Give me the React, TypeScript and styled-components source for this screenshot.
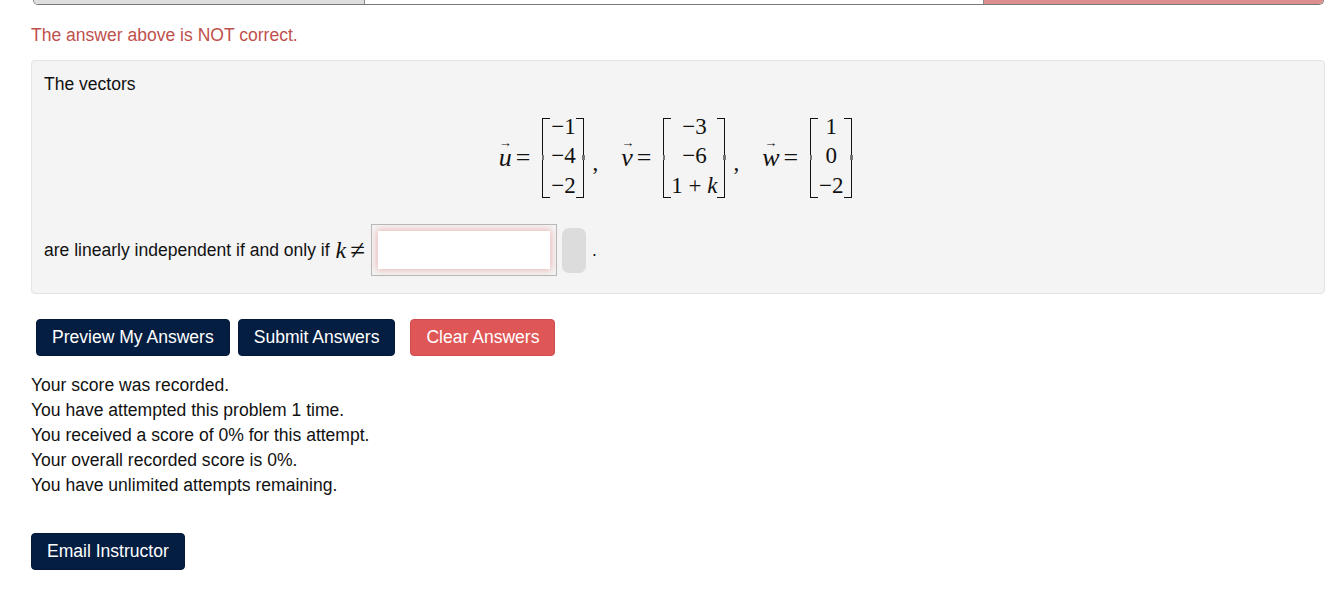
import React from "react";
import styled, { createGlobalStyle } from "styled-components";

const Global = createGlobalStyle`
  html, body { margin: 0; padding: 0; background: #fff; }
  body { font-family: "Liberation Sans", Arial, sans-serif; font-size: 17.55px; color: #111; overflow: hidden; }
`;

const Page = styled.div`
  width: 1342px;
  height: 611px;
  padding: 0 17px 0 31px;
  box-sizing: border-box;
`;

const ResultStrip = styled.div`
  display: grid;
  grid-template-columns: 331px 619px 1fr;
  height: 4px;
  margin: 0 1px 0 2px;
  border: 1px solid #777;
  border-top: none;
  border-radius: 0 0 5px 5px;
  overflow: hidden;
`;

const StripCell = styled.div<{ $bg: string }>`
  background: ${(p) => p.$bg};
  border-right: 1px solid #888;
  &:last-child { border-right: none; }
`;

const Feedback = styled.p`
  margin: 18px 0 0;
  height: 25px;
  line-height: 25px;
  color: #c0504d;
`;

const ProblemPanel = styled.section`
  margin-top: 12px;
  height: 234px;
  box-sizing: border-box;
  padding: 11px 12px;
  background: #f4f4f4;
  border: 1px solid #e3e3e3;
  border-radius: 4px;
`;

const ProblemText = styled.div`
  line-height: 25px;
`;

const DisplayMath = styled.div`
  display: flex;
  justify-content: center;
  align-items: center;
  margin: 21px 0 0 -5px;
  height: 80px;
  font-family: "Liberation Serif", "DejaVu Serif", serif;
  font-size: 23px;
  color: #111;
`;

const Term = styled.span`
  display: flex;
  align-items: center;
  margin-right: 23px;
  &:last-child { margin-right: 0; }
`;

const VarName = styled.i`
  position: relative;
  display: inline-block;
  font-size: 26px;
  font-style: italic;
  &::before {
    content: "→";
    position: absolute;
    left: 0;
    right: 0;
    top: -8px;
    font-size: 13px;
    font-style: normal;
    text-align: center;
  }
`;

const Equals = styled.span`
  margin: 0 12px 0 4px;
  font-size: 26px;
  line-height: 1;
`;

const Matrix = styled.span<{ $width: number }>`
  position: relative;
  display: grid;
  grid-auto-rows: 29.5px;
  width: ${(p) => p.$width}px;
  height: 80px;
  box-sizing: border-box;
  padding-bottom: 4px;
  align-content: center;
  justify-items: center;
  align-items: center;
  white-space: nowrap;
`;

const Bracket = styled.span<{ $side: "left" | "right" }>`
  position: absolute;
  top: 0;
  bottom: 0;
  ${(p) => p.$side}: 0;
  width: 8px;
  box-sizing: border-box;
  border: 1.5px solid #111;
  ${(p) => (p.$side === "left" ? "border-right: none;" : "border-left: none;")}
  &::after {
    content: "";
    position: absolute;
    top: 50%;
    ${(p) => (p.$side === "left" ? "left: -1.5px;" : "right: -1.5px;")}
    width: 2.5px;
    height: 5px;
    margin-top: -3px;
    background: #777;
  }
`;

const Comma = styled.span`
  margin-left: 8px;
  align-self: flex-end;
  padding-bottom: 22px;
`;

const AnswerRow = styled.div`
  display: flex;
  align-items: center;
  margin-top: 26px;
  height: 52px;
`;

const InlineVar = styled.i`
  font-family: "Liberation Serif", serif;
  font-size: 24px;
  font-weight: 400;
  margin: 0 4px 0 6px;
`;

const NotEqual = styled.span`
  font-family: "Liberation Serif", serif;
  font-size: 27px;
  margin-right: 6px;
`;

const InputFrame = styled.div`
  width: 186px;
  height: 52px;
  box-sizing: border-box;
  padding: 6px;
  border: 1px solid #b9b9b9;
`;

const AnswerInput = styled.input`
  display: block;
  width: 100%;
  height: 100%;
  box-sizing: border-box;
  margin: 0;
  padding: 0;
  border: none;
  outline: none;
  background: #fff;
  box-shadow: 0 0 7px 1px rgba(217, 83, 79, 0.4);
`;

const PreviewChip = styled.div`
  width: 24px;
  height: 45px;
  margin-left: 5px;
  background: #dcdcdc;
  border-radius: 7px;
`;

const Period = styled.span`
  margin-left: 6px;
`;

const ButtonRow = styled.div`
  display: flex;
  margin: 25px 0 0 5px;
`;

const ActionButton = styled.button<{ $danger?: boolean; $gap?: number }>`
  height: 37px;
  box-sizing: border-box;
  padding: 0 15px;
  margin: 0 ${(p) => p.$gap ?? 0}px 0 0;
  font: inherit;
  color: #fff;
  white-space: nowrap;
  background: ${(p) => (p.$danger ? "#df5656" : "#041e42")};
  border: 1px solid ${(p) => (p.$danger ? "#d04c4c" : "#03183a")};
  border-radius: 4px;
`;

const Status = styled.div`
  margin-top: 17px;
  line-height: 25px;
`;

const StatusLine = styled.div``;

const EmailWrap = styled.div`
  margin-top: 35px;
`;

const Row = ({ children }: { children: React.ReactNode }) => <span>{children}</span>;

const Mat = ({ width, rows }: { width: number; rows: React.ReactNode[] }) => (
  <Matrix $width={width}>
    <Bracket $side="left" />
    {rows.map((r, i) => (
      <Row key={i}>{r}</Row>
    ))}
    <Bracket $side="right" />
  </Matrix>
);

export default function App() {
  return (
    <Page>
      <Global />
      <ResultStrip>
        <StripCell $bg="#dedede" />
        <StripCell $bg="#ffffff" />
        <StripCell $bg="#dd8f8f" />
      </ResultStrip>
      <Feedback>The answer above is NOT correct.</Feedback>
      <ProblemPanel>
        <ProblemText>The vectors</ProblemText>
        <DisplayMath>
          <Term>
            <VarName>u</VarName>
            <Equals>=</Equals>
            <Mat width={42} rows={["−1", "−4", "−2"]} />
            <Comma>,</Comma>
          </Term>
          <Term>
            <VarName>v</VarName>
            <Equals>=</Equals>
            <Mat width={62} rows={["−3", "−6", <>1 + <i>k</i></>]} />
            <Comma>,</Comma>
          </Term>
          <Term>
            <VarName>w</VarName>
            <Equals>=</Equals>
            <Mat width={42} rows={["1", "0", "−2"]} />
          </Term>
        </DisplayMath>
        <AnswerRow>
          are linearly independent if and only if
          <InlineVar>k</InlineVar>
          <NotEqual>≠</NotEqual>
          <InputFrame>
            <AnswerInput aria-label="answer" />
          </InputFrame>
          <PreviewChip />
          <Period>.</Period>
        </AnswerRow>
      </ProblemPanel>
      <ButtonRow>
        <ActionButton $gap={8}>Preview My Answers</ActionButton>
        <ActionButton $gap={15}>Submit Answers</ActionButton>
        <ActionButton $danger>Clear Answers</ActionButton>
      </ButtonRow>
      <Status>
        <StatusLine>Your score was recorded.</StatusLine>
        <StatusLine>You have attempted this problem 1 time.</StatusLine>
        <StatusLine>You received a score of 0% for this attempt.</StatusLine>
        <StatusLine>Your overall recorded score is 0%.</StatusLine>
        <StatusLine>You have unlimited attempts remaining.</StatusLine>
      </Status>
      <EmailWrap>
        <ActionButton>Email Instructor</ActionButton>
      </EmailWrap>
    </Page>
  );
}
